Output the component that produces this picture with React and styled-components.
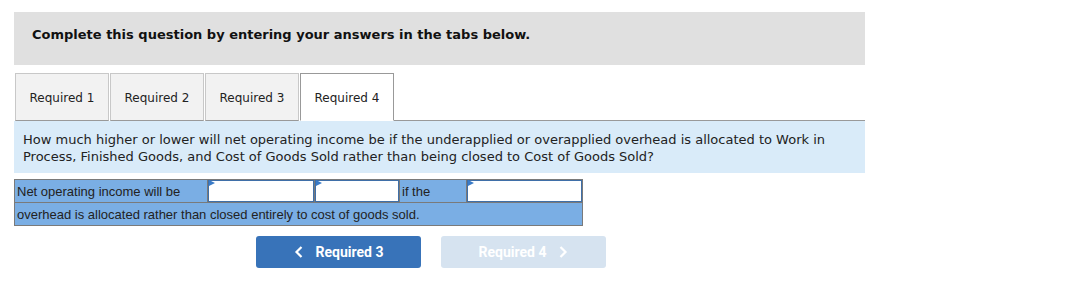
import styled, { createGlobalStyle } from "styled-components";

const Global = createGlobalStyle`
  body {
    margin: 0;
    background: #fff;
    font-family: "DejaVu Sans", Verdana, sans-serif;
  }
`;

const tabs = ["Required 1", "Required 2", "Required 3", "Required 4"];

export default function App() {
  const active = 3;
  return (
    <>
      <Global />
      <Page>
        <Banner>Complete this question by entering your answers in the tabs below.</Banner>
        <TabBar>
          {tabs.map((t, i) => (
            <Tab key={t} active={i === active}>
              {t}
            </Tab>
          ))}
          <TabFill />
        </TabBar>
        <Question>
          How much higher or lower will net operating income be if the underapplied or overapplied overhead is
          allocated to Work in Process, Finished Goods, and Cost of Goods Sold rather than being closed to Cost of
          Goods Sold?
        </Question>
        <AnswerTable>
          <colgroup>
            <col style={{ width: 193 }} />
            <col style={{ width: 107 }} />
            <col style={{ width: 85 }} />
            <col style={{ width: 67 }} />
            <col style={{ width: 116 }} />
          </colgroup>
          <tbody>
            <tr>
              <Cell>Net operating income will be</Cell>
              <InputCell>
                <Entry />
              </InputCell>
              <InputCell>
                <Entry />
              </InputCell>
              <Cell>if the</Cell>
              <InputCell>
                <Entry />
              </InputCell>
            </tr>
            <tr>
              <Cell colSpan={5}>overhead is allocated rather than closed entirely to cost of goods sold.</Cell>
            </tr>
          </tbody>
        </AnswerTable>
        <NavRow>
          <NavButton>
            <Chevron viewBox="0 0 10 14">
              <path d="M7.5 2 L2.5 7 L7.5 12" />
            </Chevron>
            Required 3
          </NavButton>
          <NavButton disabled>
            Required 4
            <Chevron viewBox="0 0 10 14">
              <path d="M2.5 2 L7.5 7 L2.5 12" />
            </Chevron>
          </NavButton>
        </NavRow>
      </Page>
    </>
  );
}

const Page = styled.div`
  width: 851px;
  padding: 12px 0 0 14px;
`;

const Banner = styled.div`
  height: 53px;
  background: #e0e0e0;
  box-sizing: border-box;
  padding: 15px 0 0 18px;
  font-size: 13px;
  font-weight: bold;
  color: #111;
`;

const TabBar = styled.div`
  display: flex;
  margin-top: 8px;
  padding-left: 1px;
  gap: 1px;
  height: 48px;
`;

const Tab = styled.div`
  width: 94px;
  box-sizing: border-box;
  display: flex;
  align-items: center;
  justify-content: center;
  padding-top: 2px;
  font-size: 12px;
  color: #222;
  background: ${(p) => (p.active ? "#fff" : "#f2f2f2")};
  border: 1px solid ${(p) => (p.active ? "#999" : "#c8c8c8")};
  border-bottom: 1px solid ${(p) => (p.active ? "#fff" : "#999")};
`;

const TabFill = styled.div`
  flex: 1;
  margin-left: -1px;
  border-bottom: 1px solid #999;
`;

const Question = styled.div`
  background: #d9ebf9;
  box-sizing: border-box;
  height: 52px;
  padding: 10px 0 0 9px;
  font-size: 13px;
  line-height: 17px;
  color: #222;
`;

const AnswerTable = styled.table`
  margin-top: 6px;
  border-collapse: collapse;
  table-layout: fixed;
  width: 568px;
  background: #7aaee4;
  font-family: "Liberation Sans", Arial, sans-serif;
  font-size: 13px;
  color: #222;
`;

const Cell = styled.td`
  border: 1px solid #7a7a7a;
  height: 22px;
  padding: 0 2px;
  white-space: nowrap;
`;

const InputCell = styled.td`
  border: 1px solid #7a7a7a;
  padding: 0;
  height: 22px;
`;

const Entry = styled.div`
  position: relative;
  height: 22px;
  box-sizing: border-box;
  background: #fff;
  border: 1px solid #3f6fa8;
  &::before {
    content: "";
    position: absolute;
    top: 0;
    left: 0;
    border-top: 3px solid transparent;
    border-bottom: 3px solid transparent;
    border-left: 6px solid #3a7bc8;
    margin-top: -1px;
  }
`;

const NavRow = styled.div`
  display: flex;
  gap: 20px;
  margin-top: 10px;
  padding-left: 242px;
`;

const NavButton = styled.button`
  width: 165px;
  height: 32px;
  border: none;
  border-radius: 3px;
  display: flex;
  align-items: center;
  justify-content: center;
  gap: 12px;
  font-family: Roboto, "Liberation Sans", sans-serif;
  font-weight: bold;
  font-size: 14px;
  color: #fff;
  background: ${(p) => (p.disabled ? "#d6e3f0" : "#3873b9")};
  padding: 0;
`;

const Chevron = styled.svg`
  width: 10px;
  height: 14px;
  fill: none;
  stroke: #fff;
  stroke-width: 2.2;
`;
